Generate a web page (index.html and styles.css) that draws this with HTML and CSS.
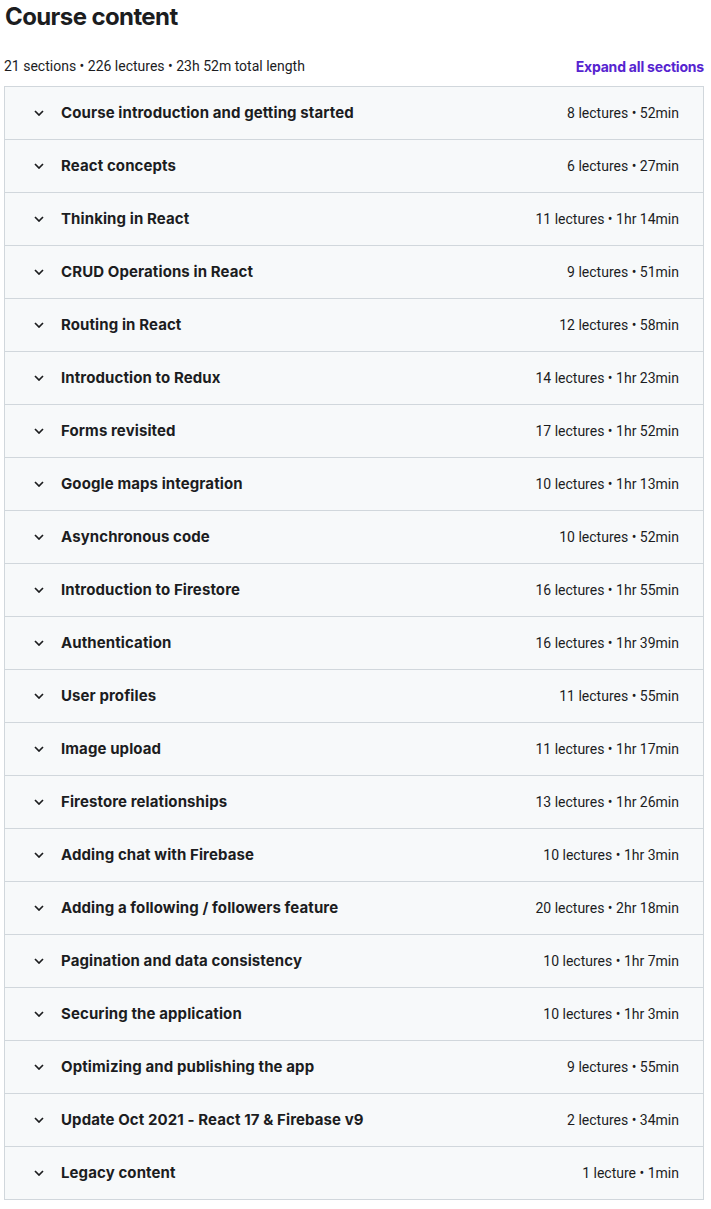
FILE: index.html
```html
<!DOCTYPE html>
<html>
<head>
<meta charset="utf-8">
<link rel="stylesheet" href="styles.css">
</head>
<body>
<div class="wrap">
  <h2 class="title">Course content</h2>
  <div class="meta">
    <span class="stats">21 sections • 226 lectures • 23h 52m total length</span>
    <button class="expand">Expand all sections</button>
  </div>
  <div class="sections">
    <div class="row"><span class="chev"><svg viewBox="0 0 10 6" width="10" height="6"><path d="M1 1 L5 5 L9 1" fill="none" stroke="#1c1d1f" stroke-width="1.7"/></svg></span><span class="name">Course introduction and getting started</span><span class="info">8 lectures • 52min</span></div>
    <div class="row"><span class="chev"><svg viewBox="0 0 10 6" width="10" height="6"><path d="M1 1 L5 5 L9 1" fill="none" stroke="#1c1d1f" stroke-width="1.7"/></svg></span><span class="name">React concepts</span><span class="info">6 lectures • 27min</span></div>
    <div class="row"><span class="chev"><svg viewBox="0 0 10 6" width="10" height="6"><path d="M1 1 L5 5 L9 1" fill="none" stroke="#1c1d1f" stroke-width="1.7"/></svg></span><span class="name">Thinking in React</span><span class="info">11 lectures • 1hr 14min</span></div>
    <div class="row"><span class="chev"><svg viewBox="0 0 10 6" width="10" height="6"><path d="M1 1 L5 5 L9 1" fill="none" stroke="#1c1d1f" stroke-width="1.7"/></svg></span><span class="name">CRUD Operations in React</span><span class="info">9 lectures • 51min</span></div>
    <div class="row"><span class="chev"><svg viewBox="0 0 10 6" width="10" height="6"><path d="M1 1 L5 5 L9 1" fill="none" stroke="#1c1d1f" stroke-width="1.7"/></svg></span><span class="name">Routing in React</span><span class="info">12 lectures • 58min</span></div>
    <div class="row"><span class="chev"><svg viewBox="0 0 10 6" width="10" height="6"><path d="M1 1 L5 5 L9 1" fill="none" stroke="#1c1d1f" stroke-width="1.7"/></svg></span><span class="name">Introduction to Redux</span><span class="info">14 lectures • 1hr 23min</span></div>
    <div class="row"><span class="chev"><svg viewBox="0 0 10 6" width="10" height="6"><path d="M1 1 L5 5 L9 1" fill="none" stroke="#1c1d1f" stroke-width="1.7"/></svg></span><span class="name">Forms revisited</span><span class="info">17 lectures • 1hr 52min</span></div>
    <div class="row"><span class="chev"><svg viewBox="0 0 10 6" width="10" height="6"><path d="M1 1 L5 5 L9 1" fill="none" stroke="#1c1d1f" stroke-width="1.7"/></svg></span><span class="name">Google maps integration</span><span class="info">10 lectures • 1hr 13min</span></div>
    <div class="row"><span class="chev"><svg viewBox="0 0 10 6" width="10" height="6"><path d="M1 1 L5 5 L9 1" fill="none" stroke="#1c1d1f" stroke-width="1.7"/></svg></span><span class="name">Asynchronous code</span><span class="info">10 lectures • 52min</span></div>
    <div class="row"><span class="chev"><svg viewBox="0 0 10 6" width="10" height="6"><path d="M1 1 L5 5 L9 1" fill="none" stroke="#1c1d1f" stroke-width="1.7"/></svg></span><span class="name">Introduction to Firestore</span><span class="info">16 lectures • 1hr 55min</span></div>
    <div class="row"><span class="chev"><svg viewBox="0 0 10 6" width="10" height="6"><path d="M1 1 L5 5 L9 1" fill="none" stroke="#1c1d1f" stroke-width="1.7"/></svg></span><span class="name">Authentication</span><span class="info">16 lectures • 1hr 39min</span></div>
    <div class="row"><span class="chev"><svg viewBox="0 0 10 6" width="10" height="6"><path d="M1 1 L5 5 L9 1" fill="none" stroke="#1c1d1f" stroke-width="1.7"/></svg></span><span class="name">User profiles</span><span class="info">11 lectures • 55min</span></div>
    <div class="row"><span class="chev"><svg viewBox="0 0 10 6" width="10" height="6"><path d="M1 1 L5 5 L9 1" fill="none" stroke="#1c1d1f" stroke-width="1.7"/></svg></span><span class="name">Image upload</span><span class="info">11 lectures • 1hr 17min</span></div>
    <div class="row"><span class="chev"><svg viewBox="0 0 10 6" width="10" height="6"><path d="M1 1 L5 5 L9 1" fill="none" stroke="#1c1d1f" stroke-width="1.7"/></svg></span><span class="name">Firestore relationships</span><span class="info">13 lectures • 1hr 26min</span></div>
    <div class="row"><span class="chev"><svg viewBox="0 0 10 6" width="10" height="6"><path d="M1 1 L5 5 L9 1" fill="none" stroke="#1c1d1f" stroke-width="1.7"/></svg></span><span class="name">Adding chat with Firebase</span><span class="info">10 lectures • 1hr 3min</span></div>
    <div class="row"><span class="chev"><svg viewBox="0 0 10 6" width="10" height="6"><path d="M1 1 L5 5 L9 1" fill="none" stroke="#1c1d1f" stroke-width="1.7"/></svg></span><span class="name">Adding a following / followers feature</span><span class="info">20 lectures • 2hr 18min</span></div>
    <div class="row"><span class="chev"><svg viewBox="0 0 10 6" width="10" height="6"><path d="M1 1 L5 5 L9 1" fill="none" stroke="#1c1d1f" stroke-width="1.7"/></svg></span><span class="name">Pagination and data consistency</span><span class="info">10 lectures • 1hr 7min</span></div>
    <div class="row"><span class="chev"><svg viewBox="0 0 10 6" width="10" height="6"><path d="M1 1 L5 5 L9 1" fill="none" stroke="#1c1d1f" stroke-width="1.7"/></svg></span><span class="name">Securing the application</span><span class="info">10 lectures • 1hr 3min</span></div>
    <div class="row"><span class="chev"><svg viewBox="0 0 10 6" width="10" height="6"><path d="M1 1 L5 5 L9 1" fill="none" stroke="#1c1d1f" stroke-width="1.7"/></svg></span><span class="name">Optimizing and publishing the app</span><span class="info">9 lectures • 55min</span></div>
    <div class="row"><span class="chev"><svg viewBox="0 0 10 6" width="10" height="6"><path d="M1 1 L5 5 L9 1" fill="none" stroke="#1c1d1f" stroke-width="1.7"/></svg></span><span class="name">Update Oct 2021 - React 17 &amp; Firebase v9</span><span class="info">2 lectures • 34min</span></div>
    <div class="row"><span class="chev"><svg viewBox="0 0 10 6" width="10" height="6"><path d="M1 1 L5 5 L9 1" fill="none" stroke="#1c1d1f" stroke-width="1.7"/></svg></span><span class="name">Legacy content</span><span class="info">1 lecture • 1min</span></div>
  </div>
</div>
</body>
</html>
```

FILE: styles.css
```css
* { box-sizing: border-box; }
body {
  margin: 0;
  background: #ffffff;
  font-family: Roboto, "Liberation Sans", sans-serif;
  color: #1c1d1f;
}
.wrap {
  width: 700px;
  margin-left: 4px;
}
.title {
  margin: 0;
  padding-top: 2px;
  padding-left: 1px;
  font-family: Inter, "Noto Sans", sans-serif;
  font-size: 24px;
  line-height: 29px;
  font-weight: 700;
  letter-spacing: -0.6px;
  color: #1c1d1f;
}
.meta {
  display: flex;
  justify-content: space-between;
  align-items: center;
  margin-top: 25px;
  height: 20px;
  margin-bottom: 10px;
}
.stats {
  font-size: 14px;
  color: #1c1d1f;
}
.expand {
  border: 0;
  background: none;
  padding: 0;
  font-family: Inter, "Noto Sans", sans-serif;
  font-size: 14px;
  font-weight: 700;
  letter-spacing: -0.2px;
  color: #5624d0;
}
.sections {
  border: 1px solid #d1d7dc;
  border-bottom: 0;
}
.row {
  display: flex;
  align-items: center;
  height: 53px;
  background: #f7f9fa;
  border-bottom: 1px solid #d1d7dc;
  padding: 0 24px 0 29px;
}
.chev {
  display: flex;
  width: 10px;
  height: 6px;
  margin-right: 17px;
  margin-bottom: 1px;
}
.name {
  flex: 1;
  font-family: Inter, "Noto Sans", sans-serif;
  font-size: 15px;
  font-weight: 700;
  letter-spacing: 0.1px;
  color: #1c1d1f;
  margin-bottom: 1px;
}
.info {
  font-size: 14px;
  color: #1c1d1f;
}
```
